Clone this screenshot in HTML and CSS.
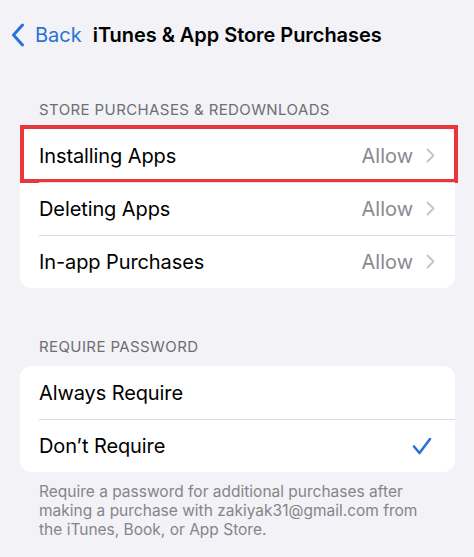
FILE: index.html
```html
<!DOCTYPE html>
<html lang="en">
<head>
<meta charset="utf-8">
<title>iTunes &amp; App Store Purchases</title>
<link rel="stylesheet" href="styles.css">
</head>
<body>
<div class="screen">
  <header class="nav">
    <a class="back" href="#">
      <svg class="back-chevron" width="14" height="24" viewBox="0 0 14 24" aria-hidden="true">
        <path d="M11.5 2 L2.5 12 L11.5 22" fill="none" stroke="currentColor" stroke-width="3" stroke-linecap="round" stroke-linejoin="round"/>
      </svg>
      <span class="back-label">Back</span>
    </a>
    <h1 class="nav-title">iTunes &amp; App Store Purchases</h1>
  </header>

  <h2 class="section-header">STORE PURCHASES &amp; REDOWNLOADS</h2>
  <div class="group">
    <div class="row row-highlighted">
      <span class="row-label">Installing Apps</span>
      <span class="row-value">Allow</span>
      <svg class="disclosure" width="9" height="15" viewBox="0 0 9 15" aria-hidden="true">
        <path d="M1.5 1.5 L7.5 7.5 L1.5 13.5" fill="none" stroke="currentColor" stroke-width="1.8" stroke-linecap="round" stroke-linejoin="round"/>
      </svg>
      <span class="highlight-frame"></span>
    </div>
    <div class="row">
      <span class="row-label">Deleting Apps</span>
      <span class="row-value">Allow</span>
      <svg class="disclosure" width="9" height="15" viewBox="0 0 9 15" aria-hidden="true">
        <path d="M1.5 1.5 L7.5 7.5 L1.5 13.5" fill="none" stroke="currentColor" stroke-width="1.8" stroke-linecap="round" stroke-linejoin="round"/>
      </svg>
    </div>
    <div class="row">
      <span class="row-label">In-app Purchases</span>
      <span class="row-value">Allow</span>
      <svg class="disclosure" width="9" height="15" viewBox="0 0 9 15" aria-hidden="true">
        <path d="M1.5 1.5 L7.5 7.5 L1.5 13.5" fill="none" stroke="currentColor" stroke-width="1.8" stroke-linecap="round" stroke-linejoin="round"/>
      </svg>
    </div>
  </div>

  <h2 class="section-header section-gap">REQUIRE PASSWORD</h2>
  <div class="group">
    <div class="row">
      <span class="row-label">Always Require</span>
    </div>
    <div class="row">
      <span class="row-label">Don’t Require</span>
      <svg class="checkmark" width="20" height="18" viewBox="0 0 20 18" aria-hidden="true">
        <path d="M2 9.5 L7.5 16 L18 2" fill="none" stroke="currentColor" stroke-width="2.6" stroke-linecap="round" stroke-linejoin="round"/>
      </svg>
    </div>
  </div>
  <p class="section-footer">Require a password for additional purchases after making a purchase with zakiyak31@gmail.com from the iTunes, Book, or App Store.</p>
</div>
</body>
</html>
```

FILE: styles.css
```css
* {
  box-sizing: border-box;
}

html, body {
  margin: 0;
  padding: 0;
  background: #f2f2f7;
}

body {
  font-family: Inter, "Noto Sans", "Liberation Sans", sans-serif;
  color: #000;
  -webkit-font-smoothing: antialiased;
}

.screen {
  width: 474px;
  min-height: 557px;
  overflow: hidden;
}

/* Navigation bar */
.nav {
  display: flex;
  align-items: center;
  height: 70px;
  padding-left: 11px;
}

.back {
  display: flex;
  align-items: center;
  gap: 10px;
  color: #2a72d9;
  text-decoration: none;
}

.back-chevron {
  display: block;
}

.back-label {
  font-size: 20px;
  letter-spacing: 0;
}

.nav-title {
  margin: 0 0 0 11px;
  font-size: 20px;
  font-weight: 600;
  letter-spacing: -0.05px;
}

/* Grouped list */
.section-header {
  margin: 30px 0 9px;
  padding: 0 39px;
  font-size: 15px;
  line-height: 20px;
  font-weight: 400;
  color: #6e6e73;
  letter-spacing: 0.4px;
}

.section-gap {
  margin-top: 49px;
}

.group {
  margin: 0 19px 0 20px;
  background: #fff;
  border-radius: 11px;
}

.row {
  position: relative;
  display: flex;
  align-items: center;
  height: 53px;
  padding: 0 20px 0 19px;
}

.row + .row::before {
  content: "";
  position: absolute;
  top: 0;
  left: 19px;
  right: 0;
  height: 1px;
  background: #dcdce0;
}

.row-label {
  flex: 1;
  font-size: 20px;
  letter-spacing: -0.1px;
}

.row-value {
  font-size: 20px;
  color: #8a8a8e;
  margin-right: 13px;
}

.disclosure {
  display: block;
  color: #c4c4c8;
}

.checkmark {
  display: block;
  color: #2a72d9;
  margin-right: 3px;
}

/* Red annotation frame around the first row */
.highlight-frame {
  position: absolute;
  top: -4px;
  left: 0;
  right: -3px;
  bottom: -1px;
  border: 4px solid #e8373a;
  pointer-events: none;
}

.section-footer {
  margin: 10px 0 0;
  padding: 0 39px;
  font-size: 15.5px;
  line-height: 19px;
  color: #85858a;
}
```
